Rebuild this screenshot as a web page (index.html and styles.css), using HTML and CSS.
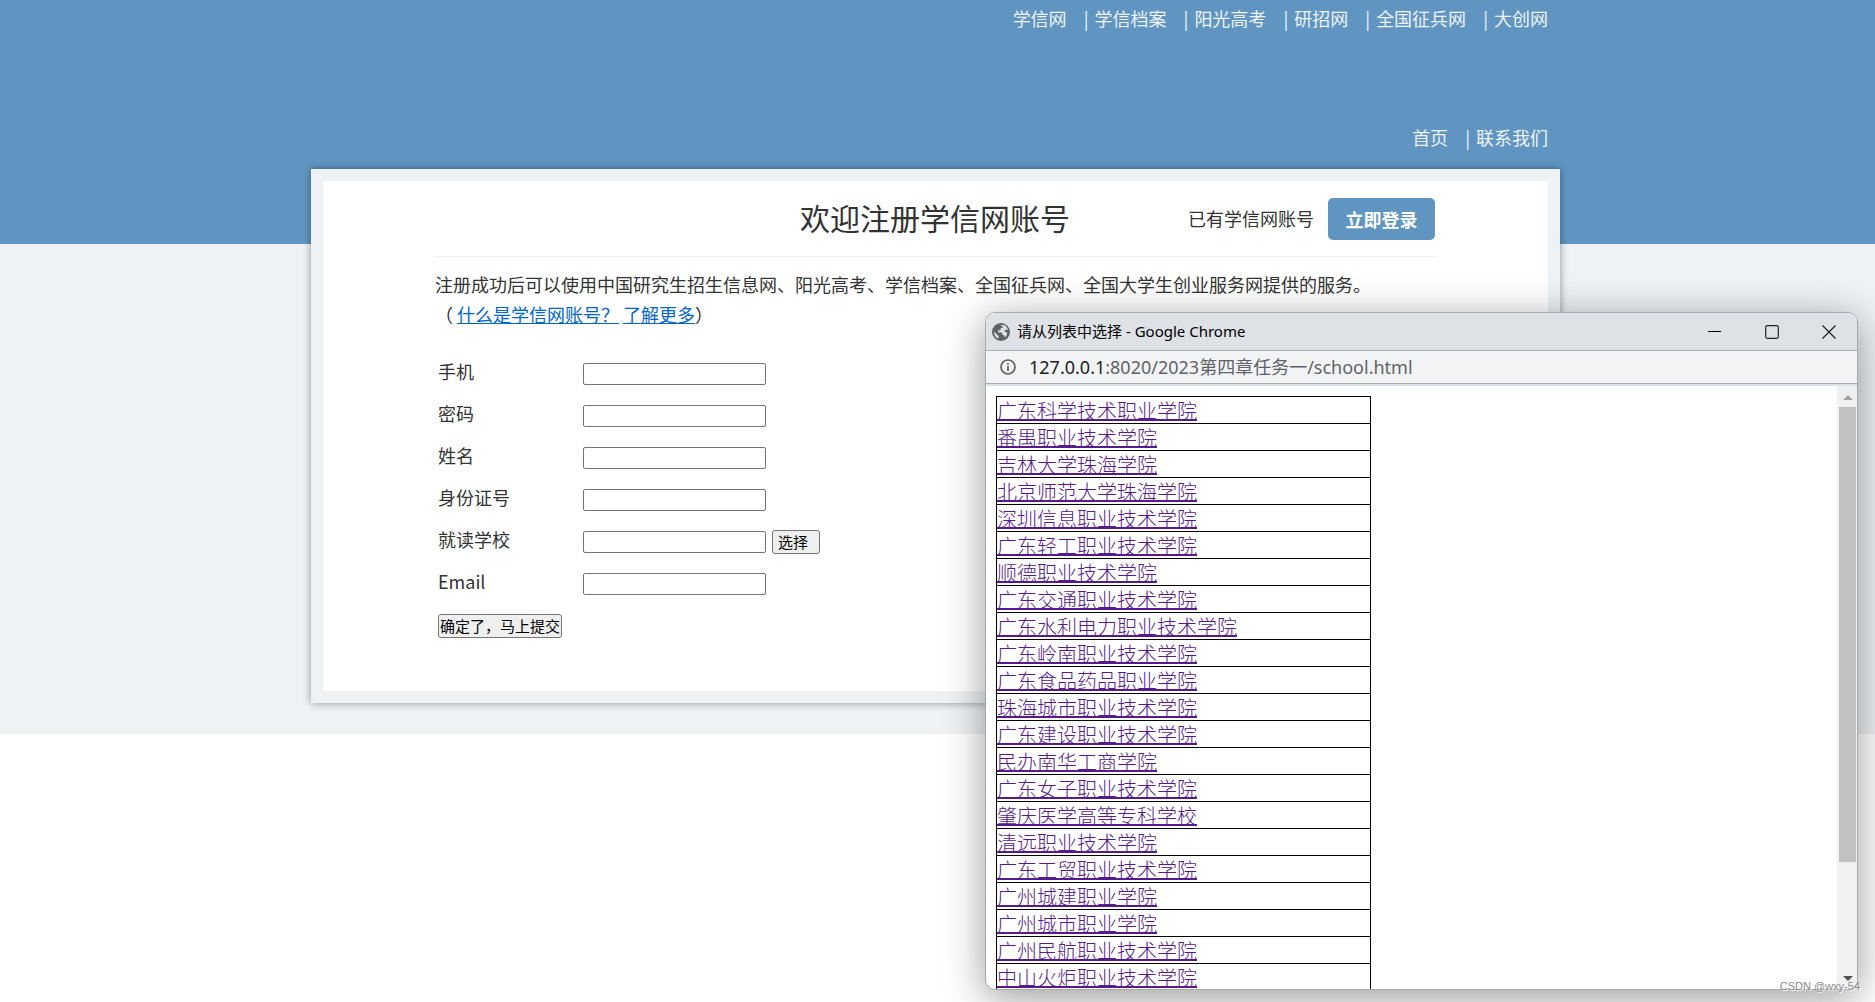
FILE: index.html
```html
<!DOCTYPE html>
<html lang="zh-CN">
<head>
<meta charset="utf-8">
<title>注册学信网账号</title>
<link rel="stylesheet" href="styles.css">
</head>
<body>
<header class="banner">
  <div class="container">
    <nav class="links top-links">
      <a href="#">学信网</a><span>|</span><a href="#">学信档案</a><span>|</span><a href="#">阳光高考</a><span>|</span><a href="#">研招网</a><span>|</span><a href="#">全国征兵网</a><span>|</span><a href="#">大创网</a>
    </nav>
    <nav class="links sub-links">
      <a href="#">首页</a><span>|</span><a href="#">联系我们</a>
    </nav>
  </div>
</header>
<main class="page">
  <section class="card">
    <div class="panel">
      <div class="head">
        <h1>欢迎注册学信网账号</h1>
        <div class="login"><span>已有学信网账号</span><button class="login-btn" type="button">立即登录</button></div>
      </div>
      <p class="intro">注册成功后可以使用中国研究生招生信息网、阳光高考、学信档案、全国征兵网、全国大学生创业服务网提供的服务。<br>（ <a href="#">什么是学信网账号？</a> <a href="#">了解更多</a>）</p>
      <form class="form">
        <div class="row"><label for="phone">手机</label><input id="phone" type="text"></div>
        <div class="row"><label for="pwd">密码</label><input id="pwd" type="password"></div>
        <div class="row"><label for="name">姓名</label><input id="name" type="text"></div>
        <div class="row"><label for="idno">身份证号</label><input id="idno" type="text"></div>
        <div class="row"><label for="school">就读学校</label><input id="school" type="text"><button class="btn pick" type="button">选择</button></div>
        <div class="row"><label for="email">Email</label><input id="email" type="text"></div>
        <div class="row"><button class="btn" type="submit">确定了，马上提交</button></div>
      </form>
    </div>
  </section>
</main>

<aside class="window">
  <div class="titlebar">
    <svg class="globe" viewBox="0 0 18 18" width="18" height="18"><circle cx="9" cy="9" r="9" fill="#5f6368"/><path d="M2 8.500 6.500 13v2.600C3.600 14.800 2 12 2 8.500zM8 2.200l4-.2c2 .900 3.500 2.700 4 5l-2.500-.5-1 2 2.500 1v2.200L13 14.500c-.4-1.800-1.200-2.700-2.800-2.700V9.500H6.300V7.300h2.200l.2-2.200h2V3.500z" fill="#dee1e6"/></svg>
    <span class="title">请从列表中选择 - Google Chrome</span>
    <button class="win-btn" type="button" aria-label="最小化"><svg viewBox="0 0 14 14" width="14" height="14"><path d="M0 6.500h13" stroke="#000"/></svg></button>
    <button class="win-btn" type="button" aria-label="最大化"><svg viewBox="0 0 14 14" width="14" height="14"><rect x=".7" y=".7" width="12.600" height="12.600" rx="1.500" fill="none" stroke="#222" stroke-width="1.200"/></svg></button>
    <button class="win-btn" type="button" aria-label="关闭"><svg viewBox="0 0 14 14" width="14" height="14"><path d="M.5.5l13 13M13.500.5l-13 13" stroke="#222" stroke-width="1.200"/></svg></button>
  </div>
  <div class="urlbar">
    <svg viewBox="0 0 16 16" width="16" height="16"><circle cx="8" cy="8" r="7" fill="none" stroke="#5f6368" stroke-width="1.700"/><path d="M8 7v5M8 4v1.800" stroke="#5f6368" stroke-width="1.800"/></svg>
    <span class="url"><b>127.0.0.1</b>:8020/2023第四章任务一/school.html</span>
  </div>
  <div class="view">
    <div class="doc">
      <table class="schools">
        <tr><td><a href="#">广东科学技术职业学院</a></td></tr>
        <tr><td><a href="#">番禺职业技术学院</a></td></tr>
        <tr><td><a href="#">吉林大学珠海学院</a></td></tr>
        <tr><td><a href="#">北京师范大学珠海学院</a></td></tr>
        <tr><td><a href="#">深圳信息职业技术学院</a></td></tr>
        <tr><td><a href="#">广东轻工职业技术学院</a></td></tr>
        <tr><td><a href="#">顺德职业技术学院</a></td></tr>
        <tr><td><a href="#">广东交通职业技术学院</a></td></tr>
        <tr><td><a href="#">广东水利电力职业技术学院</a></td></tr>
        <tr><td><a href="#">广东岭南职业技术学院</a></td></tr>
        <tr><td><a href="#">广东食品药品职业学院</a></td></tr>
        <tr><td><a href="#">珠海城市职业技术学院</a></td></tr>
        <tr><td><a href="#">广东建设职业技术学院</a></td></tr>
        <tr><td><a href="#">民办南华工商学院</a></td></tr>
        <tr><td><a href="#">广东女子职业技术学院</a></td></tr>
        <tr><td><a href="#">肇庆医学高等专科学校</a></td></tr>
        <tr><td><a href="#">清远职业技术学院</a></td></tr>
        <tr><td><a href="#">广东工贸职业技术学院</a></td></tr>
        <tr><td><a href="#">广州城建职业学院</a></td></tr>
        <tr><td><a href="#">广州城市职业学院</a></td></tr>
        <tr><td><a href="#">广州民航职业技术学院</a></td></tr>
        <tr><td><a href="#">中山火炬职业技术学院</a></td></tr>
      </table>
    </div>
    <div class="scrollbar">
      <svg viewBox="0 0 10 5" width="10" height="5"><path d="M0 5 5 0l5 5z" fill="#a3a3a3"/></svg>
      <div class="track"><div class="thumb"></div></div>
      <svg viewBox="0 0 10 5" width="10" height="5"><path d="M0 0h10L5 5z" fill="#505050"/></svg>
    </div>
  </div>
</aside>
<div class="watermark">CSDN @wxy-54</div>
</body>
</html>
```
FILE: styles.css
```css
* { box-sizing: border-box; }

body {
  position: relative;
  margin: 0;
  min-height: 100vh;
  background: #fff;
  color: #333;
  font: 400 18px/30px "Noto Sans CJK SC", sans-serif;
}

.banner {
  height: 244px;
  padding: 3px 4px 0 0;
  background: #6095c1;
}

.container {
  max-width: 1249px;
  margin: 0 auto;
  padding: 0 12px;
}

.links {
  display: flex;
  justify-content: flex-end;
  color: #eef3f7;
}
.links a { color: inherit; text-decoration: none; }
.links span { margin: 0 6px 0 17px; }
.sub-links { margin-top: 89px; }

.page {
  display: flow-root;
  padding: 0 4px 31px 0;
  background: #eef2f5;
}

.card {
  position: relative;
  max-width: 1249px;
  margin: -75px auto 0;
  padding: 12px;
  background: #eef2f5;
  box-shadow: 0 0 8px rgba(0, 0, 0, .4);
}

.panel {
  padding: 0 113px 44px 112px;
  background: #fff;
}

.head {
  display: grid;
  grid-template-columns: 1fr auto 1fr;
  align-items: center;
  height: 76px;
  border-bottom: 1px solid #eef0f2;
}
.head h1 {
  grid-column: 2;
  margin: 0;
  padding-bottom: 3px;
  font-size: 30px;
  font-weight: 400;
}
.login {
  display: flex;
  justify-content: flex-end;
  align-items: center;
  gap: 14px;
}
.login span { padding-bottom: 2px; }
.login-btn {
  width: 107px;
  height: 42px;
  padding: 0;
  border: 0;
  border-radius: 5px;
  background: #6095c1;
  color: #fff;
  font: 700 18px "Noto Sans CJK SC", sans-serif;
}

.intro { margin: 12px 0 24px; }
.intro a { color: #06c; }

.form { padding-left: 3px; }
.row {
  display: flex;
  align-items: center;
  height: 42px;
}
.row label { width: 145px; padding-bottom: 6px; }
.row input {
  width: 183px;
  height: 22px;
  border: 1px solid #767676;
  border-radius: 2px;
  background: #fff;
}
.btn {
  height: 24px;
  padding: 0 1px;
  border: 1px solid #767676;
  border-radius: 3px;
  background: #efefef;
  color: #000;
  font: 400 15px/20px "Noto Sans CJK SC", sans-serif;
}
.pick { margin-left: 6px; padding: 0 11px 0 5px; }

.window {
  position: absolute;
  top: 312px;
  right: 17px;
  bottom: 12px;
  width: 873px;
  display: flex;
  flex-direction: column;
  overflow: hidden;
  border: 1px solid #a9acae;
  border-radius: 10px;
  background: #fff;
  box-shadow: 0 8px 40px rgba(0, 0, 0, .4);
}

.titlebar {
  display: flex;
  flex: none;
  align-items: center;
  height: 38px;
  padding-left: 6px;
  border-bottom: 1px solid #b0b3b6;
  background: #dee1e6;
}
.title {
  flex: 1;
  margin-left: 7px;
  padding-bottom: 2px;
  color: #000;
  font: 400 15px/20px "Noto Sans", "Noto Sans CJK SC", sans-serif;
}
.win-btn {
  display: grid;
  place-items: center;
  width: 57px;
  height: 37px;
  padding: 0;
  border: 0;
  background: none;
}

.urlbar {
  display: flex;
  flex: none;
  align-items: center;
  gap: 13px;
  height: 33px;
  padding-left: 14px;
  border-bottom: 1px solid #a9acae;
  background: #f1f3f4;
}
.url {
  color: #5f6368;
  font: 400 18px/24px "Noto Sans", "Noto Sans CJK SC", sans-serif;
}
.url b { color: #202124; font-weight: 400; }

.view {
  display: flex;
  flex: 1;
  min-height: 0;
  border-top: 2px solid #dee1e6;
}
.doc {
  flex: 1;
  padding: 10px;
  overflow: hidden;
}
.schools {
  width: 375px;
  border-collapse: collapse;
}
.schools td {
  height: 27px;
  padding: 2px 0 0;
  border: 1px solid #000;
  font-size: 20px;
  font-weight: 300;
  line-height: 24px;
}
.schools a {
  color: #551a8b;
  text-decoration-thickness: 2px;
  text-underline-offset: 0;
}

.scrollbar {
  display: flex;
  flex-direction: column;
  align-items: center;
  width: 20px;
  padding: 9px 1px 8px 2px;
  background: #f1f1f1;
}
.scrollbar svg { flex: none; }
.track { flex: 1; width: 100%; padding: 7px 0; }
.thumb { height: 81%; background: #c1c1c1; }

.watermark {
  position: absolute;
  right: 15px;
  bottom: 8px;
  color: #8a8a8a;
  font: 400 11px/16px "Liberation Sans", sans-serif;
  text-shadow: 1px 1px 1px #fff;
}
```
